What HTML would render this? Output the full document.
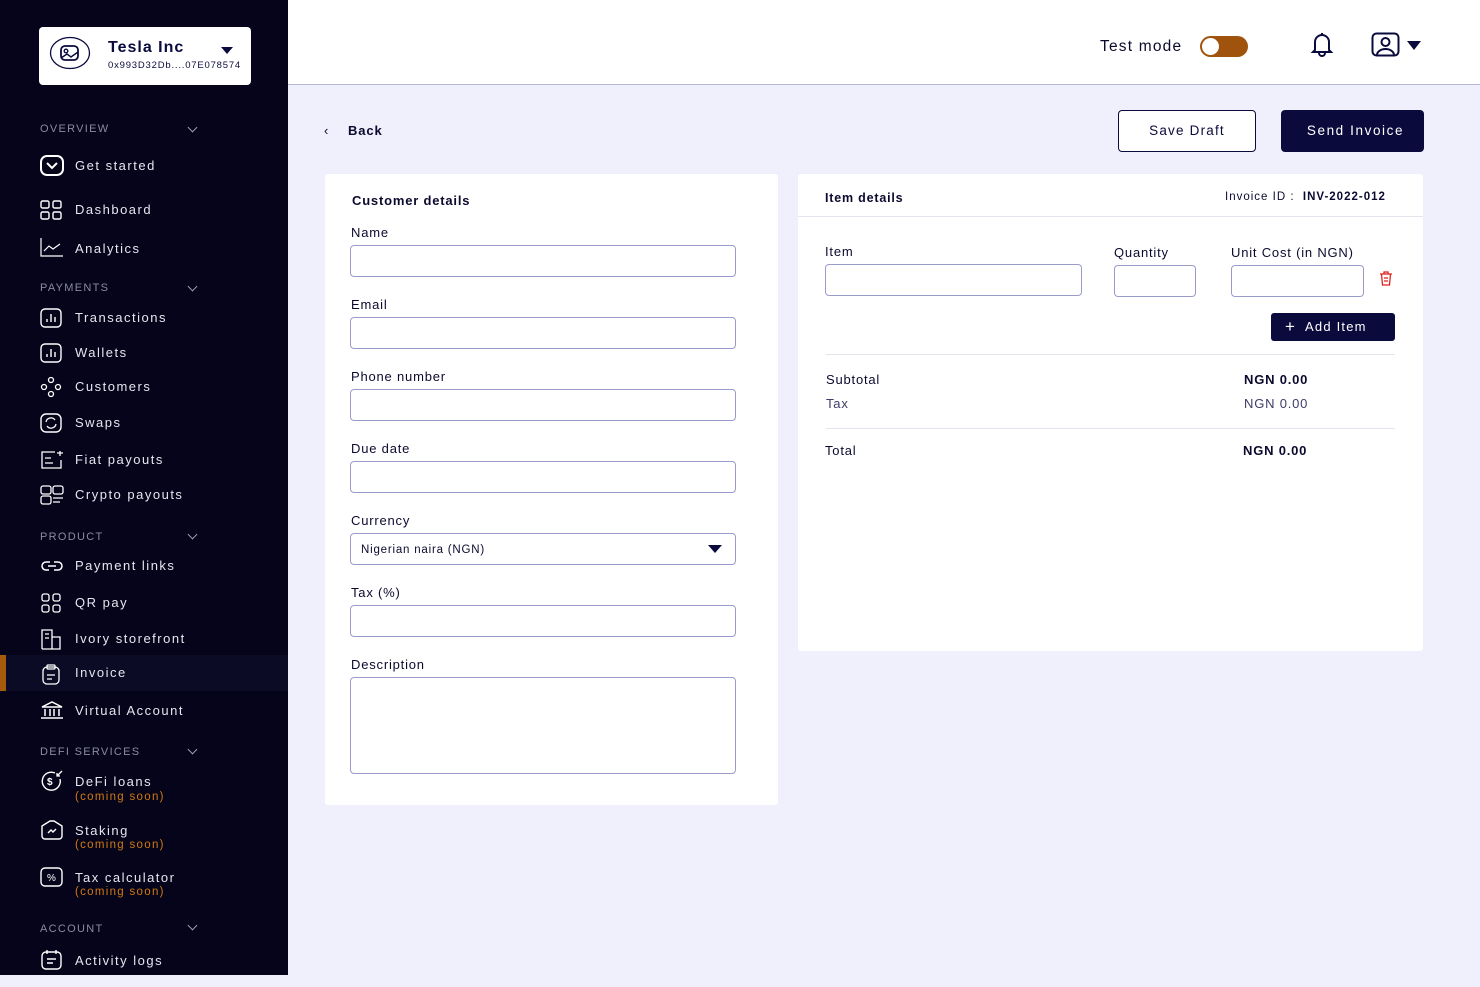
<!DOCTYPE html>
<html><head><meta charset="utf-8"><style>
*{margin:0;padding:0;box-sizing:border-box}
body{width:1480px;height:987px;background:#f0effc;font-family:"Liberation Sans",sans-serif;position:relative;overflow:hidden;color:#0b0a2e}
.sb{position:absolute;left:0;top:0;width:288px;height:975px;background:#05041a}
.a{position:absolute;line-height:16px;white-space:nowrap}
.it{left:75px;font-size:13px;letter-spacing:1.5px;color:#e6e6ef}
.sec{left:40px;font-size:11px;letter-spacing:1.3px;color:#8b8aa6}
.chev{position:absolute;left:189px;width:7px;height:7px;border-right:1.3px solid #9c9cb5;border-bottom:1.3px solid #9c9cb5;transform:rotate(45deg)}
.soon{left:75px;font-size:11.5px;letter-spacing:1.3px;color:#d17a10}
.ic{position:absolute;left:40px}
.hd{position:absolute;left:288px;top:0;width:1192px;height:85px;background:#fff;border-bottom:1.5px solid #b5b5d5}
.card{position:absolute;background:#fff;border-radius:3px}
.lbl{position:absolute;font-size:13px;letter-spacing:.8px;color:#0b0a2e}
.in{position:absolute;border:1.3px solid #9b9bcb;border-radius:4px;background:#fff}
</style></head><body>
<div class="sb">
 <div style="position:absolute;left:39px;top:27px;width:212px;height:58px;background:#fff;border-radius:4px">
  <svg style="position:absolute;left:10px;top:9px" width="42" height="34" viewBox="0 0 42 34"><ellipse cx="21" cy="17" rx="19.5" ry="15.5" fill="none" stroke="#0b0a3d" stroke-width="1.3"/><rect x="12" y="10" width="17" height="14" rx="4" fill="none" stroke="#0b0a3d" stroke-width="1.8"/><circle cx="17" cy="15" r="1.8" fill="none" stroke="#0b0a3d" stroke-width="1.4"/><path d="M12 22l6-4 4 3 7-5" fill="none" stroke="#0b0a3d" stroke-width="1.5"/></svg>
  <div class="a" style="left:69px;top:13px;font-size:16px;font-weight:bold;color:#0b0a3d;letter-spacing:1px">Tesla Inc</div>
  <div class="a" style="left:69px;top:31px;font-size:9.5px;color:#0b0a3d;letter-spacing:.8px">0x993D32Db....07E078574</div>
  <div style="position:absolute;left:182px;top:20px;border-left:6px solid transparent;border-right:6px solid transparent;border-top:7px solid #0b0a3d"></div>
 </div>
 <div class="a sec" style="top:121px">OVERVIEW</div><div class="chev" style="top:124px"></div>
 <svg class="ic" style="top:155px" width="24" height="22" viewBox="0 0 24 22"><rect x="1" y="1" width="22" height="19" rx="6" fill="none" stroke="#fff" stroke-width="2"/><path d="M7 8l5 5 5-5" fill="none" stroke="#fff" stroke-width="2"/></svg>
 <div class="a it" style="top:158px">Get started</div>
 <svg class="ic" style="top:200px" width="22" height="20" viewBox="0 0 22 20"><g fill="none" stroke="#fff" stroke-width="1.4"><rect x="1" y="1" width="8" height="7" rx="1.5"/><rect x="13" y="1" width="8" height="7" rx="1.5"/><rect x="1" y="12" width="8" height="7" rx="1.5"/><rect x="13" y="12" width="8" height="7" rx="1.5"/></g></svg>
 <div class="a it" style="top:202px">Dashboard</div>
 <svg class="ic" style="top:237px" width="24" height="20" viewBox="0 0 24 20"><path d="M1 1v18h22M4 14l5-5 4 3 7-5" fill="none" stroke="#fff" stroke-width="1.2"/></svg>
 <div class="a it" style="top:241px">Analytics</div>
 <div class="a sec" style="top:280px">PAYMENTS</div><div class="chev" style="top:283px"></div>
 <svg class="ic" style="top:308px" width="22" height="20" viewBox="0 0 22 20"><rect x="1" y="1" width="20" height="18" rx="4" fill="none" stroke="#fff" stroke-width="1.4"/><path d="M7 14v-3M11 14V6M15 14v-5" stroke="#fff" stroke-width="1.4"/></svg>
 <div class="a it" style="top:310px">Transactions</div>
 <svg class="ic" style="top:343px" width="22" height="20" viewBox="0 0 22 20"><rect x="1" y="1" width="20" height="18" rx="4" fill="none" stroke="#fff" stroke-width="1.4"/><path d="M7 14v-3M11 14V6M15 14v-5" stroke="#fff" stroke-width="1.4"/></svg>
 <div class="a it" style="top:345px">Wallets</div>
 <svg class="ic" style="top:376px" width="22" height="22" viewBox="0 0 22 22"><g fill="none" stroke="#fff" stroke-width="1.3"><circle cx="11" cy="4" r="2.5"/><circle cx="4" cy="11" r="2.5"/><circle cx="18" cy="11" r="2.5"/><circle cx="11" cy="18" r="2.5"/></g></svg>
 <div class="a it" style="top:379px">Customers</div>
 <svg class="ic" style="top:413px" width="22" height="20" viewBox="0 0 22 20"><rect x="1" y="1" width="20" height="18" rx="5" fill="none" stroke="#fff" stroke-width="1.4"/><path d="M6 9a5 5 0 0 1 9-2M16 11a5 5 0 0 1-9 2" fill="none" stroke="#fff" stroke-width="1.3"/></svg>
 <div class="a it" style="top:415px">Swaps</div>
 <svg class="ic" style="top:450px" width="24" height="20" viewBox="0 0 24 20"><path d="M15 2H2v16h19v-8M5 8h6M5 13h8M17 3h6M20 1v5" fill="none" stroke="#fff" stroke-width="1.3"/></svg>
 <div class="a it" style="top:452px">Fiat payouts</div>
 <svg class="ic" style="top:485px" width="24" height="20" viewBox="0 0 24 20"><g fill="none" stroke="#fff" stroke-width="1.3"><rect x="1" y="1" width="10" height="8" rx="2"/><rect x="13" y="1" width="10" height="8" rx="2"/><rect x="1" y="11" width="10" height="8" rx="2"/><path d="M13 13h10M13 17h7"/></g></svg>
 <div class="a it" style="top:487px">Crypto payouts</div>
 <div class="a sec" style="top:529px">PRODUCT</div><div class="chev" style="top:531px"></div>
 <svg class="ic" style="top:558px" width="24" height="16" viewBox="0 0 24 16"><path d="M10 4H6a4 4 0 0 0 0 8h3M14 4h4a4 4 0 0 1 0 8h-4M8 8h8" fill="none" stroke="#fff" stroke-width="1.5"/></svg>
 <div class="a it" style="top:558px">Payment links</div>
 <svg class="ic" style="top:592px" width="22" height="22" viewBox="0 0 22 22"><g fill="none" stroke="#fff" stroke-width="1.3"><rect x="2" y="2" width="7" height="7" rx="2"/><rect x="13" y="2" width="7" height="7" rx="2"/><rect x="2" y="13" width="7" height="7" rx="2"/><rect x="13" y="13" width="7" height="7" rx="2"/></g></svg>
 <div class="a it" style="top:595px">QR pay</div>
 <svg class="ic" style="top:628px" width="24" height="22" viewBox="0 0 24 22"><g fill="none" stroke="#fff" stroke-width="1.3"><path d="M2 21V2h10v19M12 9h8v12H2"/><path d="M5 6h4M5 10h4"/></g></svg>
 <div class="a it" style="top:631px">Ivory storefront</div>
 <div style="position:absolute;left:0;top:655px;width:288px;height:36px;background:#0b0b26"></div>
 <div style="position:absolute;left:0;top:655px;width:6px;height:36px;background:#a55a0c"></div>
 <svg class="ic" style="top:663px" width="22" height="22" viewBox="0 0 22 22"><g fill="none" stroke="#fff" stroke-width="1.3"><rect x="3" y="4" width="16" height="17" rx="4"/><rect x="7" y="2" width="8" height="4" rx="1"/><path d="M7 12h8M7 16h5"/></g></svg>
 <div class="a it" style="top:665px">Invoice</div>
 <svg class="ic" style="top:700px" width="24" height="20" viewBox="0 0 24 20"><path d="M2 7L12 2l10 5zM5 9v7M10 9v7M14 9v7M19 9v7M1 18h22" fill="none" stroke="#fff" stroke-width="1.5"/></svg>
 <div class="a it" style="top:703px">Virtual Account</div>
 <div class="a sec" style="top:744px">DEFI SERVICES</div><div class="chev" style="top:746px"></div>
 <svg class="ic" style="top:770px" width="24" height="22" viewBox="0 0 24 22"><path d="M20 9a9 9 0 1 1-5-6" fill="none" stroke="#fff" stroke-width="1.4"/><text x="7" y="15" font-size="10" fill="#fff" font-family="Liberation Sans" font-weight="bold">$</text><path d="M22 1l-5 5M17 3v3h3" fill="none" stroke="#fff" stroke-width="1.3"/></svg>
 <div class="a it" style="top:774px">DeFi loans</div>
 <div class="a soon" style="top:789px">(coming soon)</div>
 <svg class="ic" style="top:820px" width="24" height="20" viewBox="0 0 24 20"><path d="M2 6L10 1h4l8 5v10a3 3 0 0 1-3 3H5a3 3 0 0 1-3-3zM8 13l3-3 2 2 3-3" fill="none" stroke="#fff" stroke-width="1.4"/></svg>
 <div class="a it" style="top:823px">Staking</div>
 <div class="a soon" style="top:837px">(coming soon)</div>
 <svg class="ic" style="top:867px" width="24" height="20" viewBox="0 0 24 20"><rect x="1" y="1" width="21" height="18" rx="4" fill="none" stroke="#fff" stroke-width="1.4"/><text x="7" y="14" font-size="10" fill="#fff" font-family="Liberation Sans">%</text></svg>
 <div class="a it" style="top:870px">Tax calculator</div>
 <div class="a soon" style="top:884px">(coming soon)</div>
 <div class="a sec" style="top:921px">ACCOUNT</div><div class="chev" style="top:922px"></div>
 <svg class="ic" style="top:949px" width="24" height="22" viewBox="0 0 24 22"><g fill="none" stroke="#fff" stroke-width="1.4"><rect x="2" y="3" width="19" height="17" rx="4"/><path d="M7 1v4M16 1v4M7 10h9M7 14h6"/></g></svg>
 <div class="a it" style="top:953px">Activity logs</div>
</div>

<div class="hd">
 <div class="a" style="left:812px;top:39px;font-size:15.5px;letter-spacing:1.2px;color:#0b0a2e">Test mode</div>
 <div style="position:absolute;left:912px;top:36px;width:48px;height:21px;background:#a0530c;border-radius:11px"><div style="position:absolute;left:2px;top:2px;width:17px;height:17px;border-radius:50%;background:#fff"></div></div>
 <svg style="position:absolute;left:1021px;top:31px" width="26" height="26" viewBox="0 0 26 26"><path d="M6 19V11a7 7 0 0 1 14 0v8l2 2H4zM10 22a3 3 0 0 0 6 0M13 2v2" fill="none" stroke="#0b0a3d" stroke-width="2"/></svg>
 <svg style="position:absolute;left:1083px;top:32px" width="30" height="26" viewBox="0 0 30 26"><rect x="1.5" y="1.5" width="26" height="22" rx="4" fill="none" stroke="#0b0a3d" stroke-width="2"/><circle cx="14.5" cy="10" r="4" fill="none" stroke="#0b0a3d" stroke-width="2"/><path d="M6 23a8.5 6 0 0 1 17 0" fill="none" stroke="#0b0a3d" stroke-width="2"/></svg>
 <div style="position:absolute;left:1119px;top:41px;border-left:7px solid transparent;border-right:7px solid transparent;border-top:9px solid #0b0a3d"></div>
</div>

<div class="a" style="left:324px;top:123px;font-size:13px;color:#0b0a2e">&lsaquo;</div>
<div class="a" style="left:348px;top:123px;font-size:13px;font-weight:bold;letter-spacing:.9px">Back</div>
<div style="position:absolute;left:1118px;top:110px;width:138px;height:42px;border:1.5px solid #0b0a3d;border-radius:4px;background:#fff;text-align:center;line-height:39px;font-size:13.5px;letter-spacing:1.2px;color:#0b0a3d">Save Draft</div>
<div style="position:absolute;left:1281px;top:110px;width:143px;height:42px;background:#0b0a3d;border-radius:4px;text-align:center;line-height:42px;font-size:13.5px;letter-spacing:1.6px;color:#fff;padding-left:6px">Send Invoice</div>

<div class="card" style="left:325px;top:174px;width:453px;height:631px">
 <div class="a" style="left:27px;top:19px;font-size:13px;font-weight:bold;letter-spacing:.8px">Customer details</div>
 <div class="a lbl" style="left:26px;top:51px">Name</div><div class="in" style="left:25px;top:71px;width:386px;height:32px"></div>
 <div class="a lbl" style="left:26px;top:123px">Email</div><div class="in" style="left:25px;top:143px;width:386px;height:32px"></div>
 <div class="a lbl" style="left:26px;top:195px">Phone number</div><div class="in" style="left:25px;top:215px;width:386px;height:32px"></div>
 <div class="a lbl" style="left:26px;top:267px">Due date</div><div class="in" style="left:25px;top:287px;width:386px;height:32px"></div>
 <div class="a lbl" style="left:26px;top:339px">Currency</div><div class="in" style="left:25px;top:359px;width:386px;height:32px"><div class="a" style="left:10px;top:8px;font-size:11.5px;letter-spacing:.8px">Nigerian naira (NGN)</div><div style="position:absolute;left:357px;top:11px;border-left:7px solid transparent;border-right:7px solid transparent;border-top:8px solid #0b0a3d"></div></div>
 <div class="a lbl" style="left:26px;top:411px">Tax (%)</div><div class="in" style="left:25px;top:431px;width:386px;height:32px"></div>
 <div class="a lbl" style="left:26px;top:483px">Description</div><div class="in" style="left:25px;top:503px;width:386px;height:97px"></div>
</div>

<div class="card" style="left:798px;top:174px;width:625px;height:477px">
 <div class="a" style="left:27px;top:16px;font-size:12.5px;font-weight:bold;letter-spacing:.8px">Item details</div>
 <div class="a" style="left:427px;top:15px;font-size:11.5px;letter-spacing:1px">Invoice ID :&nbsp; <b>INV-2022-012</b></div>
 <div style="position:absolute;left:0;top:42px;width:625px;height:1px;background:#e4e4ec"></div>
 <div class="a lbl" style="left:27px;top:70px">Item</div><div class="in" style="left:27px;top:90px;width:257px;height:32px"></div>
 <div class="a lbl" style="left:316px;top:71px">Quantity</div><div class="in" style="left:316px;top:91px;width:82px;height:32px"></div>
 <div class="a lbl" style="left:433px;top:71px">Unit Cost (in NGN)</div><div class="in" style="left:433px;top:91px;width:133px;height:32px"></div>
 <svg style="position:absolute;left:581px;top:97px" width="14" height="15" viewBox="0 0 14 15"><path d="M1 3h12M5 3V1h4v2M2.5 3l1 11h7l1-11M5 7h4M5 10h4" fill="none" stroke="#e0201b" stroke-width="1.3"/></svg>
 <div style="position:absolute;left:473px;top:139px;width:124px;height:28px;background:#0b0a3d;border-radius:3px;color:#fff;font-size:13px;letter-spacing:1.2px;line-height:28px;padding-left:14px"><span style="font-size:17px;vertical-align:-1px">+</span>&nbsp; Add Item</div>
 <div style="position:absolute;left:28px;top:180px;width:569px;height:1px;background:#e4e4ec"></div>
 <div class="a lbl" style="left:28px;top:198px">Subtotal</div><div class="a lbl" style="left:446px;top:198px;font-weight:bold">NGN 0.00</div>
 <div class="a lbl" style="left:28px;top:222px;color:#3d3c6a">Tax</div><div class="a lbl" style="left:446px;top:222px;color:#3d3c6a">NGN 0.00</div>
 <div style="position:absolute;left:28px;top:254px;width:569px;height:1px;background:#e4e4ec"></div>
 <div class="a lbl" style="left:27px;top:269px">Total</div><div class="a lbl" style="left:445px;top:269px;font-weight:bold">NGN 0.00</div>
</div>
</body></html>
